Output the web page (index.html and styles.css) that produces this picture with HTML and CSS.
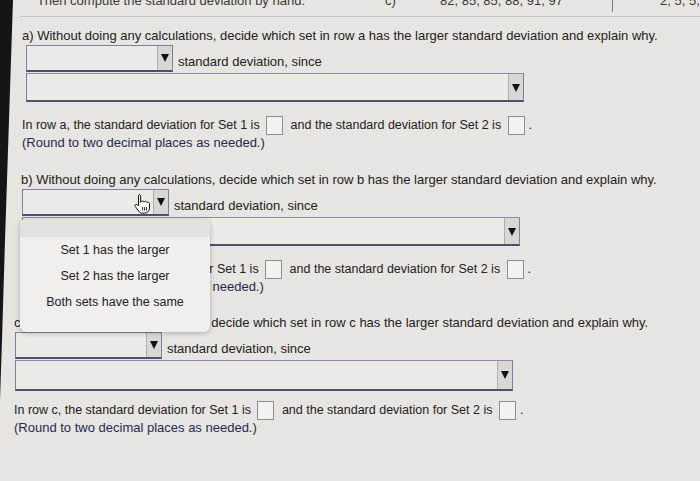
FILE: index.html
```html
<!DOCTYPE html>
<html>
<head>
<meta charset="utf-8">
<link rel="stylesheet" href="styles.css">
</head>
<body>
<div class="page">
  <div class="toprow">
    <div class="toprow-inner">
      <span class="t-desc">Then compute the standard deviation by hand.</span>
      <span class="t-label">c)</span>
      <span class="t-set1">82, 85, 85, 88, 91, 97</span>
      <span class="t-sep"></span>
      <span class="t-set2">2, 5, 5, 9, 10, 11</span>
    </div>
  </div>
  <div class="rule"></div>

  <section class="part part-a">
    <p class="q">a) Without doing any calculations, decide which set in row a has the larger standard deviation and explain why.</p>
    <div class="dd-row">
      <div class="dd dd-short"><span class="dd-btn"><i class="tri"></i></span></div>
      <span class="after">standard deviation, since</span>
    </div>
    <div class="dd dd-long"><span class="dd-btn"><i class="tri"></i></span></div>
    <p class="ans">In row a, the standard deviation for Set 1 is <span class="box"></span> and the standard deviation for Set 2 is <span class="box"></span>.</p>
    <p class="note">(Round to two decimal places as needed.)</p>
  </section>

  <section class="part part-b">
    <p class="q">b) Without doing any calculations, decide which set in row b has the larger standard deviation and explain why.</p>
    <div class="dd-row">
      <div class="dd dd-short"><span class="dd-btn"><i class="tri"></i></span></div>
      <span class="after">standard deviation, since</span>
    </div>
    <div class="dd dd-long"><span class="dd-btn"><i class="tri"></i></span></div>
    <p class="ans">In row b, the standard deviation for Set 1 is <span class="box"></span> and the standard deviation for Set 2 is <span class="box"></span>.</p>
    <p class="note">(Round to two decimal places as needed.)</p>
  </section>

  <section class="part part-c">
    <p class="q">c) Without doing any calculations, decide which set in row c has the larger standard deviation and explain why.</p>
    <div class="dd-row">
      <div class="dd dd-short"><span class="dd-btn"><i class="tri"></i></span></div>
      <span class="after">standard deviation, since</span>
    </div>
    <div class="dd dd-long"><span class="dd-btn"><i class="tri"></i></span></div>
    <p class="ans">In row c, the standard deviation for Set 1 is <span class="box"></span> and the standard deviation for Set 2 is <span class="box"></span>.</p>
    <p class="note">(Round to two decimal places as needed.)</p>
  </section>
</div>

<div class="menu">
  <div class="menu-blank"></div>
  <div class="menu-item">Set 1 has the larger</div>
  <div class="menu-item">Set 2 has the larger</div>
  <div class="menu-item">Both sets have the same</div>
</div>

<svg class="cursor" width="18" height="22" viewBox="0 0 18 22">
  <path d="M6 1.5c1 0 1.6.6 1.6 1.6v6.2l.4-.1c.2-.8.8-1.2 1.5-1.2.8 0 1.3.5 1.5 1.1.3-.5.8-.8 1.4-.8.8 0 1.4.5 1.5 1.3.3-.3.7-.4 1.1-.4.9 0 1.5.7 1.5 1.6v4.4c0 2.6-1.9 4.9-4.8 4.9H9.3c-1.5 0-2.600-.6-3.5-1.8L2.3 13.6c-.5-.7-.4-1.5.2-2 .6-.5 1.4-.4 2 .2l1 1.1V3.1c0-1 .5-1.6 1.5-1.6z" fill="#fff" stroke="#111" stroke-width="1"/>
  <path d="M9.6 14v3.5M11.6 14v3.5M13.6 14v3.5" stroke="#111" stroke-width=".9"/>
</svg>

<svg class="bezel" width="16" height="481" viewBox="0 0 16 481">
  <polygon points="0,0 13,0 9,120 5,240 2,340 0,400" fill="#151515"/>
</svg>
</body>
</html>
```

FILE: styles.css
```css
html, body {
  margin: 0;
  padding: 0;
}
body {
  background: #e7e5e1;
  font-family: "Liberation Sans", Arial, sans-serif;
  font-size: 13px;
  color: #222;
  width: 700px;
  height: 481px;
  overflow: hidden;
  position: relative;
}
p { margin: 0; }

.page {
  display: flex;
  flex-direction: column;
}

/* top table row (cut off) */
.toprow {
  height: 14px;
  overflow: hidden;
}
.toprow-inner {
  margin-top: -10px;
  display: grid;
  grid-template-columns: 305px 135px 172px 1px 1fr;
  line-height: 22px;
  font-size: 13px;
  color: #3a3a3a;
}
.t-desc { text-align: right; white-space: nowrap; overflow: hidden; }
.t-label { padding-left: 80px; }
.t-set1 { white-space: nowrap; }
.t-sep { background: #7a7a7a; }
.t-set2 { padding-left: 47px; white-space: nowrap; }

.rule {
  height: 1px;
  background: #c6c4c0;
  margin-left: 20px;
  margin-top: 2px;
}

.part {
  display: flex;
  flex-direction: column;
  align-items: flex-start;
}
.part-a { padding-left: 22px; margin-top: 11px; }
.part-b { padding-left: 21px; margin-top: 21px; }
.part-c { padding-left: 14px; margin-top: 20px; }

.q {
  line-height: 16px;
  white-space: nowrap;
}

.dd-row {
  display: flex;
  align-items: center;
  margin-top: 1px;
  margin-left: 4px;
}
.part-b .dd-row, .part-c .dd-row { margin-left: 1px; }

.dd {
  box-sizing: border-box;
  background: #eceae7;
  border: 1px solid #7d80a0;
  border-bottom: 2px solid #4c4f72;
  display: flex;
  justify-content: flex-end;
  align-items: stretch;
}
.dd-short { width: 147px; height: 27px; }
.dd-long {
  width: 498px;
  height: 29px;
  margin-left: 4px;
  margin-top: 1px;
  border-top: 1px solid #8a8da8;
}
.part-b .dd-long, .part-c .dd-long { margin-left: 1px; }
.part-c .dd-long { height: 31px; }

.dd-btn {
  width: 15px;
  background: #d9d7d4;
  border-left: 1px solid #b0aeb0;
  display: flex;
  justify-content: center;
  padding-top: 8px;
  box-sizing: border-box;
}
.dd-long .dd-btn { padding-top: 10px; }
.tri {
  width: 0;
  height: 0;
  border-left: 4px solid transparent;
  border-right: 4px solid transparent;
  border-top: 8px solid #111;
}

.after {
  margin-left: 5px;
  padding-top: 5px;
  color: #222;
}

.ans {
  margin-top: 13px;
  line-height: 20px;
  font-size: 12.5px;
  display: flex;
  align-items: center;
  white-space: pre;
}
.part-c .ans { margin-top: 9px; }
.box {
  display: inline-block;
  box-sizing: border-box;
  width: 17px;
  height: 19px;
  background: #f3f2ef;
  border: 1px solid #8e8e8e;
  margin: 0 4px 0 3px;
}
.note {
  line-height: 16px;
  color: #262a52;
}

/* open dropdown menu */
.menu {
  position: absolute;
  left: 20px;
  top: 219px;
  width: 190px;
  height: 113px;
  background: #f0efed;
  border-radius: 6px;
  box-shadow: 0 1px 5px rgba(0,0,0,0.25);
  overflow: hidden;
  font-size: 12.5px;
  color: #222;
}
.menu-blank {
  height: 18px;
  background: #e3e2df;
}
.menu-item {
  height: 26px;
  line-height: 26px;
  text-align: center;
}

.cursor {
  position: absolute;
  left: 133px;
  top: 193px;
}
.bezel {
  position: absolute;
  left: 0;
  top: 0;
}
```
